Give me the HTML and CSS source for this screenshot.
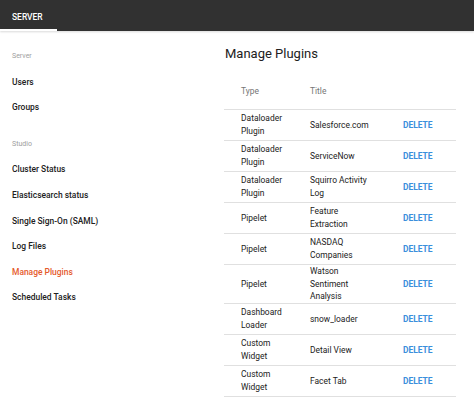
FILE: index.html
```html
<!DOCTYPE html>
<html lang="en">
<head>
    <meta charset="UTF-8">
    <meta name="viewport" content="width=device-width, initial-scale=1.0">
    <title>Manage Plugins</title>
    <link rel="stylesheet" href="styles.css">
</head>
<body>
    <div class="barra">
        <div class="pestana activa">SERVER</div>
    </div>

    <div class="contenido">
        <div class="menu">
            <div class="subtitulo">Server</div>
            <div class="item">Users</div>
            <div class="item">Groups</div>
            <div class="separador"></div>
            <div class="subtitulo">Studio</div>
            <div class="item">Cluster Status</div>
            <div class="item">Elasticsearch status</div>
            <div class="item">Single Sign-On (SAML)</div>
            <div class="item">Log Files</div>
            <div class="item seleccionado">Manage Plugins</div>
            <div class="item">Scheduled Tasks</div>
        </div>

        <div class="principal">
            <h1>Manage Plugins</h1>
            <table class="plugins">
                <thead>
                    <tr>
                        <th class="col-tipo">Type</th>
                        <th class="col-titulo">Title</th>
                        <th></th>
                    </tr>
                </thead>
                <tbody>
                    <tr>
                        <td class="col-tipo">Dataloader Plugin</td>
                        <td class="col-titulo">Salesforce.com</td>
                        <td><a class="borrar">DELETE</a></td>
                    </tr>
                    <tr>
                        <td class="col-tipo">Dataloader Plugin</td>
                        <td class="col-titulo">ServiceNow</td>
                        <td><a class="borrar">DELETE</a></td>
                    </tr>
                    <tr>
                        <td class="col-tipo">Dataloader Plugin</td>
                        <td class="col-titulo">Squirro Activity Log</td>
                        <td><a class="borrar">DELETE</a></td>
                    </tr>
                    <tr>
                        <td class="col-tipo">Pipelet</td>
                        <td class="col-titulo">Feature Extraction</td>
                        <td><a class="borrar">DELETE</a></td>
                    </tr>
                    <tr>
                        <td class="col-tipo">Pipelet</td>
                        <td class="col-titulo">NASDAQ Companies</td>
                        <td><a class="borrar">DELETE</a></td>
                    </tr>
                    <tr>
                        <td class="col-tipo">Pipelet</td>
                        <td class="col-titulo">Watson Sentiment Analysis</td>
                        <td><a class="borrar">DELETE</a></td>
                    </tr>
                    <tr>
                        <td class="col-tipo">Dashboard Loader</td>
                        <td class="col-titulo">snow_loader</td>
                        <td><a class="borrar">DELETE</a></td>
                    </tr>
                    <tr>
                        <td class="col-tipo">Custom Widget</td>
                        <td class="col-titulo">Detail View</td>
                        <td><a class="borrar">DELETE</a></td>
                    </tr>
                    <tr>
                        <td class="col-tipo">Custom Widget</td>
                        <td class="col-titulo">Facet Tab</td>
                        <td><a class="borrar">DELETE</a></td>
                    </tr>
                </tbody>
            </table>
        </div>
    </div>
</body>
</html>
```

FILE: styles.css
```css
body {
    margin: 0;
    background-color: #fff;
    font-family: Roboto, "Liberation Sans", Arial, sans-serif;
    color: #212121;
}
.barra {
    display: flex;
    height: 31px;
    background-color: #313131;
    box-shadow: 0 1px 2px rgba(0,0,0,0.15);
}
.pestana {
    box-sizing: border-box;
    width: 57px;
    padding-left: 12px;
    padding-top: 12px;
    font-size: 8.45px;
    font-weight: 500;
    color: #fff;
}
.activa {
    border-bottom: 2px solid #fff;
}
.contenido {
    display: flex;
}
.menu {
    width: 224px;
    padding-top: 13px;
}
.subtitulo {
    height: 25.6px;
    line-height: 25.6px;
    padding-left: 12px;
    font-size: 7px;
    color: #9e9e9e;
}
.item {
    height: 25.6px;
    line-height: 25.6px;
    padding-left: 12px;
    font-size: 8.45px;
    font-weight: 500;
    color: #212121;
}
.seleccionado {
    color: #e55a2b;
}
.separador {
    height: 11px;
}
.principal {
    flex: 1;
}
h1 {
    margin: 0;
    padding: 15px 0 0 1px;
    height: 28px;
    line-height: 16px;
    font-size: 13px;
    font-weight: 400;
    color: #212121;
}
.plugins {
    width: 232px;
    border-collapse: collapse;
    table-layout: fixed;
    font-size: 8.45px;
    line-height: 12.7px;
}
.plugins th {
    height: 35px;
    text-align: left;
    font-weight: 400;
    color: #757575;
    border-bottom: 1px solid #e0e0e0;
    padding: 0;
}
.plugins td {
    height: 30px;
    padding: 0;
    border-bottom: 1px solid #e0e0e0;
    vertical-align: middle;
}
.col-tipo {
    width: 52px;
    padding: 0 17px !important;
}
.col-titulo {
    width: 62px;
    padding-right: 31px !important;
}
.borrar {
    font-weight: 700;
    color: #3b8fdc;
    cursor: pointer;
}
```
